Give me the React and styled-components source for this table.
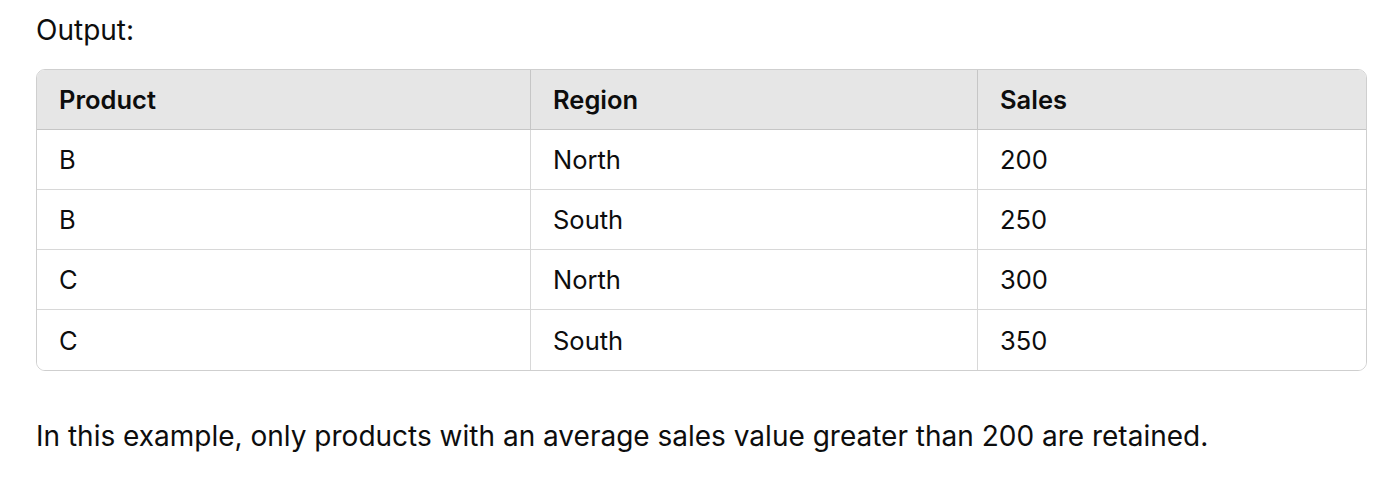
import React from "react";
import styled, { createGlobalStyle } from "styled-components";

const Global = createGlobalStyle`
  html, body { margin: 0; padding: 0; background: #ffffff; }
  body {
    font-family: Inter, "Noto Sans", "Liberation Sans", sans-serif;
    color: #0d0d0d;
  }
`;

const Page = styled.div`
  width: 1400px;
  height: 491px;
  box-sizing: border-box;
  padding: 12px 33px 0 36px;
`;

const Label = styled.p`
  margin: 0;
  font-size: 28px;
  line-height: 36px;
`;

const TableWrap = styled.div`
  margin-top: 21px;
  border: 1px solid #cfcfcf;
  border-radius: 9px;
  overflow: hidden;
`;

const Table = styled.table`
  width: 100%;
  border-collapse: separate;
  border-spacing: 0;
  table-layout: fixed;
`;

const Cell = styled.td`
  height: 60px;
  box-sizing: border-box;
  padding: 0 22px;
  font-size: 25.5px;
  font-weight: ${(p) => (p.$head ? 600 : 400)};
  background: ${(p) => (p.$head ? "#e6e6e6" : "#ffffff")};
  border-bottom: ${(p) => (p.$last ? "none" : p.$head ? "1px solid #c6c6c6" : "1px solid #d8d8d8")};
  border-right: ${(p) => (p.$lastCol ? "none" : p.$head ? "1px solid #c6c6c6" : "1px solid #d8d8d8")};
  text-align: left;
  vertical-align: middle;
`;

const Paragraph = styled.p`
  margin: 47px 0 0;
  font-size: 28px;
  line-height: 36px;
`;

const headers = ["Product", "Region", "Sales"];
const rows = [
  ["B", "North", "200"],
  ["B", "South", "250"],
  ["C", "North", "300"],
  ["C", "South", "350"],
];

export default function App() {
  return (
    <Page>
      <Global />
      <Label>Output:</Label>
      <TableWrap>
        <Table>
          <colgroup>
            <col style={{ width: "494px" }} />
            <col style={{ width: "447px" }} />
            <col />
          </colgroup>
          <thead>
            <tr>
              {headers.map((h, i) => (
                <Cell as="th" key={h} $head $lastCol={i === 2}>
                  {h}
                </Cell>
              ))}
            </tr>
          </thead>
          <tbody>
            {rows.map((r, ri) => (
              <tr key={ri}>
                {r.map((c, ci) => (
                  <Cell key={ci} $lastCol={ci === 2} $last={ri === rows.length - 1}>
                    {c}
                  </Cell>
                ))}
              </tr>
            ))}
          </tbody>
        </Table>
      </TableWrap>
      <Paragraph>
        In this example, only products with an average sales value greater than 200 are retained.
      </Paragraph>
    </Page>
  );
}
